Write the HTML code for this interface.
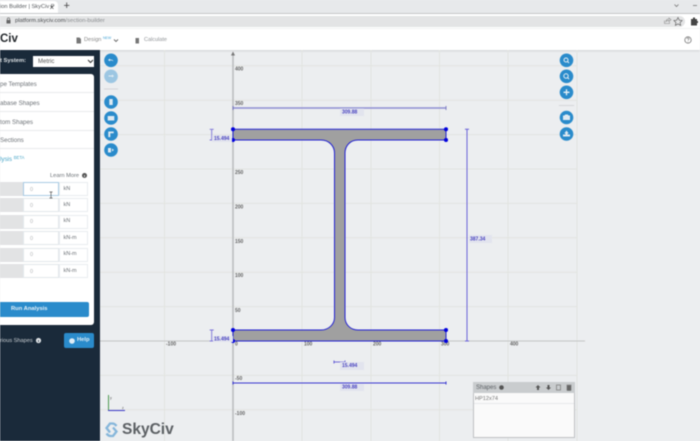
<!DOCTYPE html>
<html>
<head>
<meta charset="utf-8">
<style>
html,body{margin:0;padding:0;width:700px;height:441px;overflow:hidden;background:#eceef0}
body{font-family:"Liberation Sans",sans-serif;position:relative}
#w{position:absolute;left:0;top:0;width:700px;height:441px;overflow:hidden;filter:blur(.4px)}
.a{position:absolute;white-space:nowrap}
.sep{position:absolute;left:0;width:94px;height:1px;background:#e8eaec}
.it{position:absolute;font-size:6.200px;color:#6e7378;white-space:nowrap}
.g{position:absolute;left:0;width:23px;height:14px;background:#e2e3e4}
.i{position:absolute;left:23px;width:36px;height:14px;background:#fff;border:.5px solid #e2e7eb;box-sizing:border-box;font-size:5.500px;color:#b5b8ba;padding:3.500px 0 0 6px}
.u{position:absolute;left:59px;width:29px;height:14px;background:#fff;border:1px solid #e9edef;box-sizing:border-box;font-size:5.500px;color:#6e7378;padding:2.800px 0 0 3.500px}
</style>
</head>
<body>
<div id="w">
<!-- browser chrome -->
<div class="a" style="left:0;top:0;width:700px;height:14px;background:#e7e9eb"></div>
<div class="a" style="left:0;top:1px;width:58px;height:13px;background:#fff;border-radius:0 4px 0 0"></div>
<div class="a" style="left:0;top:4px;font-size:5.700px;color:#55585c">ion Builder | SkyCiv P</div>
<div class="a" style="left:49.500px;top:3px;font-size:8px;color:#444">×</div>
<div class="a" style="left:63.500px;top:0;font-size:11px;color:#444">+</div>
<div class="a" style="left:0;top:13px;width:700px;height:1px;background:#c4c6c8"></div>
<div class="a" style="left:0;top:14px;width:700px;height:15px;background:#fff"></div>
<div class="a" style="left:-8px;top:15.500px;width:693px;height:11.500px;background:#e3e4e5;border-radius:6px"></div>
<div class="a" style="left:15px;top:18px;font-size:5.800px;color:#4a4d50">platform.skyciv.com<span style="color:#8b8e91">/section-builder</span></div>
<svg class="a" style="left:0;top:0" width="700" height="50">
<rect x="6.500" y="20" width="4" height="3.500" fill="#666"/><path d="M7.300 20v-1a1.200 1.200 0 0 1 2.400 0v1" fill="none" stroke="#666" stroke-width=".7"/>
<path d="M674.500 4.500l2 2 2-2" fill="none" stroke="#777" stroke-width=".8"/>
<path d="M693 5.500h4" stroke="#777" stroke-width=".8"/>
<path d="M664.500 20.500v3h5v-1.500M666 21.500c0-2 1.500-2.500 3-2.500v-1l2 1.700-2 1.700v-1c-1 0-2.200 0-3 1.100z" fill="none" stroke="#888" stroke-width=".6"/>
<path d="M678 17.500l1.300 2.700 2.800.3-2 2 .5 2.800-2.600-1.400-2.600 1.400.5-2.800-2-2 2.800-.3z" fill="none" stroke="#666" stroke-width=".7"/>
<path d="M691 19h2v-1.500h2V19h2v2h1v2h-1v2.500h-6z" fill="#444"/>
</svg>
<!-- app header -->
<div class="a" style="left:0;top:28px;width:700px;height:1px;background:#f4f5f5"></div>
<div class="a" style="left:0;top:29px;width:700px;height:21px;background:#fff;box-shadow:0 1px 2px rgba(0,0,0,.12)"></div>
<div class="a" style="left:0;top:32.500px;font-size:11.500px;font-weight:bold;color:#23272b">Civ</div>
<svg class="a" style="left:0;top:30px" width="700" height="20">
<path d="M76.500 7.500h3l1.500 1.500v4.500h-4.500z" fill="#777"/>
<rect x="135.500" y="8" width="3.500" height="5.500" fill="#777"/>
<path d="M114 9.500l2 2 2-2" fill="none" stroke="#666" stroke-width=".9"/>
<circle cx="688" cy="10" r="3.200" fill="none" stroke="#777" stroke-width=".8"/>
<path d="M687 9c0-1.300 2-1.300 2 0 0 .8-1 .8-1 1.600M688 11.500v.6" fill="none" stroke="#666" stroke-width=".6"/>
</svg>
<div class="a" style="left:84px;top:37px;font-size:5.600px;color:#888">Design <span style="font-size:3.500px;color:#49a6d6;position:relative;top:-2.500px">NEW</span></div>
<div class="a" style="left:144px;top:37px;font-size:5.500px;color:#919498">Calculate</div>

<!-- canvas -->
<svg class="a" style="left:100px;top:50px" width="600" height="391" viewBox="100 50 600 391">
<g stroke="#e2e4e0" stroke-width="1" fill="none">
<path d="M164.500 50V441M302 50V441M371 50V441M439.500 50V441M508 50V441M577 50V441"/>
<path d="M100 65.800H577M100 100.200H577M100 134.600H577M100 169H577M100 203.400H577M100 237.800H577M100 272.200H577M100 306.600H577M100 375.400H577M100 409.800H577"/>
</g>
<path d="M100 341H585" stroke="#c4c6c6" stroke-width="1"/>
<path d="M233 54V441" stroke="#b8babc" stroke-width="1.500"/>
<path d="M233 51.500l-2 4h4z" fill="#777"/>
<g font-family="Liberation Sans,sans-serif" font-size="5" fill="#666" font-weight="bold">
<text x="235" y="70.500">400</text><text x="235" y="105">350</text><text x="235" y="140">300</text>
<text x="235" y="174">250</text><text x="235" y="208.500">200</text><text x="235" y="243">150</text>
<text x="235" y="277">100</text><text x="235" y="312">50</text><text x="235" y="345.500">0</text>
<text x="166" y="345.500">-100</text><text x="304" y="345.500">100</text><text x="373" y="345.500">200</text>
<text x="441" y="345.500">300</text><text x="510" y="345.500">400</text>
<text x="235" y="380">-50</text><text x="235" y="415">-100</text>
</g>
<!-- I-beam -->
<path d="M233 129.300H446V140H358C350 140 345 146 345 153V317.500C345 324 350 330 358 330H446V341H233V330H321C329 330 334.500 324 334.500 317.500V153C334.500 146 329 140 321 140H233Z" fill="#a0a0a0" stroke="#2222d0" stroke-width="1"/>
<g fill="#0000dd"><circle cx="233" cy="129.300" r="2"/><circle cx="446" cy="129.300" r="2"/><circle cx="233" cy="140" r="2"/><circle cx="446" cy="140" r="2"/><circle cx="233" cy="330" r="2"/><circle cx="446" cy="330" r="2"/><circle cx="233" cy="341" r="2"/><circle cx="446" cy="341" r="2"/></g>
<!-- dims -->
<g fill="none">
<path d="M233 108H446" stroke="#8e8ed2" stroke-width="1.400"/>
<path d="M233 106V110M446 106V110" stroke="#6a6ab8" stroke-width=".8"/>
<path d="M209.700 129.300h4M211.700 129.300V140M209.700 140h4" stroke="#7a72d8" stroke-width=".9"/>
<path d="M209.700 330h4M211.700 330V341M209.700 341h4" stroke="#7a72d8" stroke-width=".9"/>
<path d="M465 129.300h4M467 129.300V341M465 341h4" stroke="#6a62d8" stroke-width="1"/>
<path d="M334 360.500v3M345 360.500v3M334 362H345" stroke="#4a40d0" stroke-width=".8"/>
<path d="M233 383H446M233 381.500v3M446 381.500v3" stroke="#3a38d0" stroke-width="1"/>
</g>
<g fill="#e2e4ee">
<rect x="340" y="108.500" width="24" height="7.500"/><rect x="212" y="135" width="20" height="7"/>
<rect x="213" y="336" width="20" height="6"/><rect x="469" y="235" width="23" height="8"/>
<rect x="340" y="362" width="24" height="8"/><rect x="340" y="384" width="24" height="7"/>
</g>
<g font-family="Liberation Sans,sans-serif" font-size="5" fill="#4a44c0" font-weight="bold">
<text x="342" y="113.700">309.88</text><text x="214" y="140">15.494</text><text x="214" y="340.500">15.494</text>
<text x="470" y="240.500">387.34</text><text x="342" y="367">15.494</text><text x="342" y="388.500">309.88</text>
</g>
<!-- side buttons -->
<path d="M104 89H118M559 105.500H574" stroke="#d4d6d8" stroke-width="1"/>
<g fill="#2a8bcb">
<circle cx="111" cy="60.300" r="6.800"/><circle cx="111" cy="76.300" r="6.800" fill="#9cc6e2"/>
<circle cx="111" cy="102" r="6.800"/><circle cx="111" cy="118" r="6.800"/><circle cx="111" cy="134" r="6.800"/><circle cx="111" cy="150" r="6.800"/>
<circle cx="566.500" cy="60.300" r="6.800"/><circle cx="566.500" cy="76.300" r="6.800"/><circle cx="566.500" cy="92.300" r="6.800"/>
<circle cx="566.500" cy="117.500" r="6.800"/><circle cx="566.500" cy="134" r="6.800"/>
</g>
<g fill="#dfeaf2">
<path d="M108 60l2-1.500V59.500c2 0 3 .5 3.500 1.800-.8-.7-2-.9-3.500-.9v1z"/>
<path d="M114 76l-2-1.500v1h-3.500v1H112v1z" fill="#e4eef5"/>
<rect x="109.300" y="99" width="3.400" height="6"/>
<path d="M107.700 116h6.600v4.500h-6.600z"/>
<path d="M108.300 131.500h5.400v1.800h-3.400v3.800h-2z"/>
<path d="M108 148h3v4.500h-3zM112 148.500l2 1.500-2 1.500z"/>
<path d="M563.500 92.300h6M566.500 89.300v6" stroke="#e8f1f6" stroke-width="1.300"/>
<path d="M563 115.500h1.500l.7-1h2.600l.7 1h1.500v4.500h-7z"/>
<path d="M566.500 130.500l2.200 3h-1.200v1h2.500v2h-7v-2h2.500v-1h-1.200z"/>
</g>
<g fill="none" stroke="#e4eef5" stroke-width="1">
<circle cx="566" cy="60" r="2"/><path d="M567.500 61.500l1.500 1.500"/>
<circle cx="566" cy="76" r="2.200"/><path d="M567.600 77.600l1.500 1.500"/>
</g>
<!-- axes mini -->
<path d="M108.500 395V410.500" stroke="#4f9a50" stroke-width="1"/>
<path d="M108 410.500H125" stroke="#3a38c8" stroke-width="1"/>
<text x="110" y="399" font-size="3.500" fill="#555" font-family="Liberation Sans,sans-serif">y</text>
<text x="122" y="409" font-size="3.500" fill="#555" font-family="Liberation Sans,sans-serif">z</text>
<!-- logo icon -->
<path d="M116.500 426c-1-1.300-2-2.500-4-2.500h-2.500l-3.500 4.500 3.500 4.500" fill="none" stroke="#86b6da" stroke-width="2.300"/>
<path d="M106.500 433.500c1 1.300 2 2.500 4 2.500h2.500l3.500-4.500-3.500-4" fill="none" stroke="#86b6da" stroke-width="2.300"/>
</svg>
<div class="a" style="left:122px;top:420.500px;font-size:15.500px;font-weight:bold;color:#5c6064">SkyCiv</div>

<!-- sidebar -->
<div class="a" style="left:0;top:50px;width:100px;height:391px;background:#1a2a3a"></div>
<div class="a" style="left:0;top:58px;font-size:5.800px;font-weight:bold;color:#dfe3e6">t System:</div>
<div class="a" style="left:33px;top:56px;width:61px;height:11px;background:#fff;font-size:6px;color:#555;padding:2.500px 0 0 5px;box-sizing:border-box">Metric</div>
<svg class="a" style="left:87px;top:59px" width="7" height="5"><path d="M1 1l2.500 2.500L6 1" fill="none" stroke="#333" stroke-width="1"/></svg>
<div class="a" style="left:0;top:74px;width:94px;height:251px;background:#fff;border-radius:0 3px 3px 0"></div>
<div class="it" style="left:0;top:81px">pe Templates</div>
<div class="sep" style="top:92px"></div>
<div class="it" style="left:0;top:100px">abase Shapes</div>
<div class="sep" style="top:111px"></div>
<div class="it" style="left:0;top:119px">tom Shapes</div>
<div class="sep" style="top:130px"></div>
<div class="it" style="left:0;top:137px">Sections</div>
<div class="sep" style="top:148px"></div>
<div class="it" style="left:0;top:156px;color:#4aa6c8">lysis <span style="font-size:4.200px;position:relative;top:-2px">BETA</span></div>
<div class="it" style="left:50px;top:172.500px;font-size:5.700px">Learn More</div>
<svg class="a" style="left:80.500px;top:171.500px" width="7" height="7"><circle cx="3.500" cy="3.500" r="2.500" fill="#555"/><path d="M3.500 3v2" stroke="#fff" stroke-width=".7"/></svg>

<div class="g" style="top:182px"></div><div class="i" style="top:182px;border-color:#a9cbe4">0</div><div class="u" style="top:182px">kN</div>
<div class="g" style="top:198px"></div><div class="i" style="top:198px">0</div><div class="u" style="top:198px">kN</div>
<div class="g" style="top:214.500px"></div><div class="i" style="top:214.500px">0</div><div class="u" style="top:214.500px">kN</div>
<div class="g" style="top:231px"></div><div class="i" style="top:231px">0</div><div class="u" style="top:231px">kN-m</div>
<div class="g" style="top:247.500px"></div><div class="i" style="top:247.500px">0</div><div class="u" style="top:247.500px">kN-m</div>
<div class="g" style="top:264px"></div><div class="i" style="top:264px">0</div><div class="u" style="top:264px">kN-m</div>
<svg class="a" style="left:48px;top:190.500px" width="6" height="10"><path d="M1.500 1h3M3 1v6M1.500 7h3" stroke="#555" stroke-width=".7" fill="none"/></svg>

<div class="a" style="left:0;top:302px;width:89px;height:15px;background:#2a8bcb;border-radius:0 2px 2px 0"></div>
<div class="a" style="left:11px;top:306px;color:#e8f2f8;font-size:5.800px;font-weight:bold">Run Analysis</div>
<div class="a" style="left:0;top:337.500px;font-size:5.600px;color:#c9ced2">rious Shapes</div>
<svg class="a" style="left:34.500px;top:336.500px" width="7" height="7"><circle cx="3.500" cy="3.500" r="2.600" fill="#dfe3e6"/><path d="M3.500 3v2" stroke="#1a2a3a" stroke-width=".7"/></svg>
<div class="a" style="left:64px;top:333px;width:30px;height:15px;background:#2a8bcb;border-radius:2px"></div>
<div class="a" style="left:77px;top:337px;color:#dcebf5;font-size:5.800px;font-weight:bold">Help</div>
<svg class="a" style="left:68px;top:336.500px" width="8" height="8"><circle cx="4" cy="4" r="2.800" fill="#e0edf6"/></svg>

<!-- shapes panel -->
<div class="a" style="left:473px;top:382px;width:102px;height:56px;background:#fafafa;border:1px solid #bfc2c4;box-sizing:border-box"></div>
<div class="a" style="left:473px;top:382px;width:102px;height:11px;background:#c9ccce"></div>
<div class="a" style="left:476px;top:384.500px;font-size:6px;color:#5d6166">Shapes</div>
<svg class="a" style="left:473px;top:382px" width="102" height="11">
<circle cx="28.500" cy="5.500" r="2.300" fill="#555"/>
<path d="M65 3l-2.500 2.500h1.500v2.500h2V5.500h1.500z" fill="#555"/>
<path d="M75.500 8l2.500-2.500h-1.500V3h-2v2.500H73z" fill="#555"/>
<rect x="83.500" y="3" width="4" height="5" fill="none" stroke="#777" stroke-width=".7"/>
<path d="M94 3.500h4v5h-4zM93.500 3h5" fill="#666" stroke="#666" stroke-width=".5"/>
</svg>
<div class="a" style="left:475px;top:395.500px;font-size:5.600px;color:#777">HP12x74</div>
<div class="a" style="left:474px;top:403px;width:100px;height:1px;background:#e8e9ea"></div>
</div>
</body>
</html>
